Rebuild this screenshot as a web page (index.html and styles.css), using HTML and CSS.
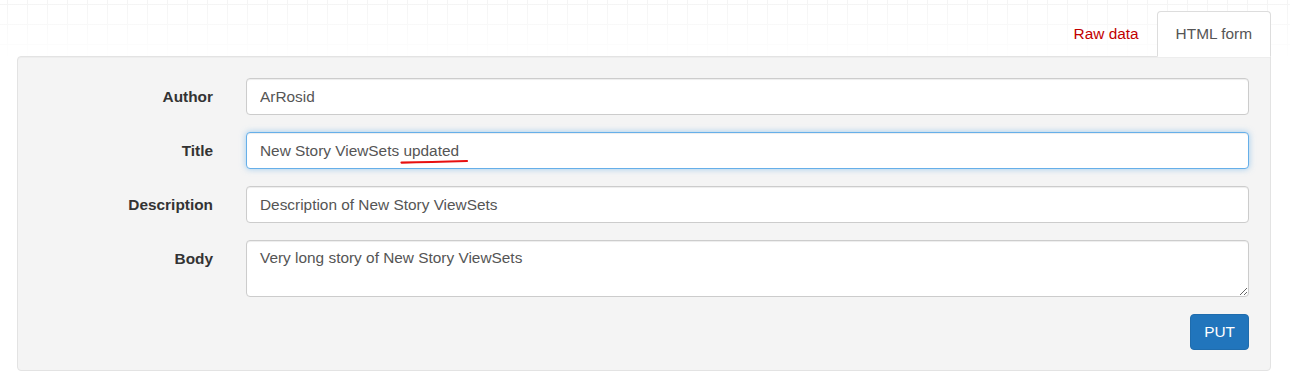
FILE: index.html
```html
<!DOCTYPE html>
<html lang="en">
<head>
<meta charset="utf-8">
<title>Story Instance</title>
<link rel="stylesheet" href="styles.css">
</head>
<body>
<div class="container">
  <ul class="tabs">
    <li class="tab"><a href="#raw">Raw data</a></li>
    <li class="tab active"><a href="#form">HTML form</a></li>
  </ul>
  <div class="well">
    <form class="form">
      <div class="group">
        <label class="label" for="author">Author</label>
        <div class="control"><input class="input" id="author" type="text" value="ArRosid"></div>
      </div>
      <div class="group">
        <label class="label" for="title">Title</label>
        <div class="control">
          <input class="input focused" id="title" type="text" value="New Story ViewSets updated">
          <svg class="scribble" width="72" height="6" viewBox="0 0 72 6"><path d="M1.5 3.6 Q 30 3.2 67 2" fill="none" stroke="#e8100f" stroke-width="2.2" stroke-linecap="round"/></svg>
        </div>
      </div>
      <div class="group">
        <label class="label" for="desc">Description</label>
        <div class="control"><input class="input" id="desc" type="text" value="Description of New Story ViewSets"></div>
      </div>
      <div class="group">
        <label class="label" for="body">Body</label>
        <div class="control"><textarea class="input area" id="body">Very long story of New Story ViewSets</textarea></div>
      </div>
      <div class="actions">
        <button class="btn" type="button">PUT</button>
      </div>
    </form>
  </div>
</div>
</body>
</html>
```
FILE: styles.css
```css
html, body {
  height: 100%;
}
body {
  margin: 0;
  font-family: "Liberation Sans", Arial, sans-serif;
  font-size: 15.4px;
  color: #333;
  background-color: #fff;
  background-image:
    linear-gradient(to bottom, rgba(255,255,255,0.25) 0, rgba(255,255,255,0.65) 30px, #fff 58px),
    linear-gradient(90deg, #f0f0f0 1px, transparent 1px),
    linear-gradient(#f0f0f0 1px, transparent 1px);
  background-size: 100% 100%, 20px 20px, 20px 20px;
  background-position: 0 0, 7px 4px, 7px 4px;
  background-repeat: no-repeat, repeat, repeat;
}
.container {
  padding: 11px 19px 0 17px;
}
.tabs {
  list-style: none;
  margin: 0;
  padding: 0;
  display: flex;
  justify-content: flex-end;
  position: relative;
  z-index: 1;
  margin-bottom: -1px;
}
.tab a {
  display: block;
  padding: 11px 17px;
  line-height: 22px;
  border: 1px solid transparent;
  border-radius: 4px 4px 0 0;
  color: #c20000;
  text-decoration: none;
}
.tab.active a {
  padding: 11px 18px;
  color: #555;
  background: #fff;
  border-color: #ddd #ddd transparent #ddd;
}
.well {
  background: #f4f4f4;
  border: 1px solid #e3e3e3;
  border-radius: 4px 0 4px 4px;
  padding: 21px 21px 20px 21px;
  box-shadow: inset 0 1px 1px rgba(0,0,0,0.03);
}
.group {
  display: grid;
  grid-template-columns: 174px 1fr;
  column-gap: 33px;
  margin-bottom: 17px;
}
.label {
  text-align: right;
  font-weight: bold;
  padding-top: 8px;
  line-height: 22px;
}
.control {
  position: relative;
}
.input {
  display: block;
  box-sizing: border-box;
  width: 100%;
  height: 37px;
  margin: 0;
  padding: 6px 13px;
  font-family: "Liberation Sans", Arial, sans-serif;
  font-size: 15.4px;
  line-height: 22px;
  color: #555;
  background: #fff;
  border: 1px solid #ccc;
  border-radius: 4px;
  box-shadow: inset 0 1px 1px rgba(0,0,0,0.075);
}
.input.focused {
  border-color: #66afe9;
  box-shadow: inset 0 1px 1px rgba(0,0,0,0.075), 0 0 6px rgba(102,175,233,0.6);
}
.area {
  height: 57px;
  resize: vertical;
}
.scribble {
  position: absolute;
  left: 154px;
  top: 27px;
}
.actions {
  display: flex;
  justify-content: flex-end;
}
.btn {
  font-family: "Liberation Sans", Arial, sans-serif;
  font-size: 15.4px;
  line-height: 22px;
  color: #fff;
  background: #2175bc;
  border: 1px solid #1f6cad;
  border-radius: 4px;
  padding: 6px 13px;
  height: 36px;
}
```
